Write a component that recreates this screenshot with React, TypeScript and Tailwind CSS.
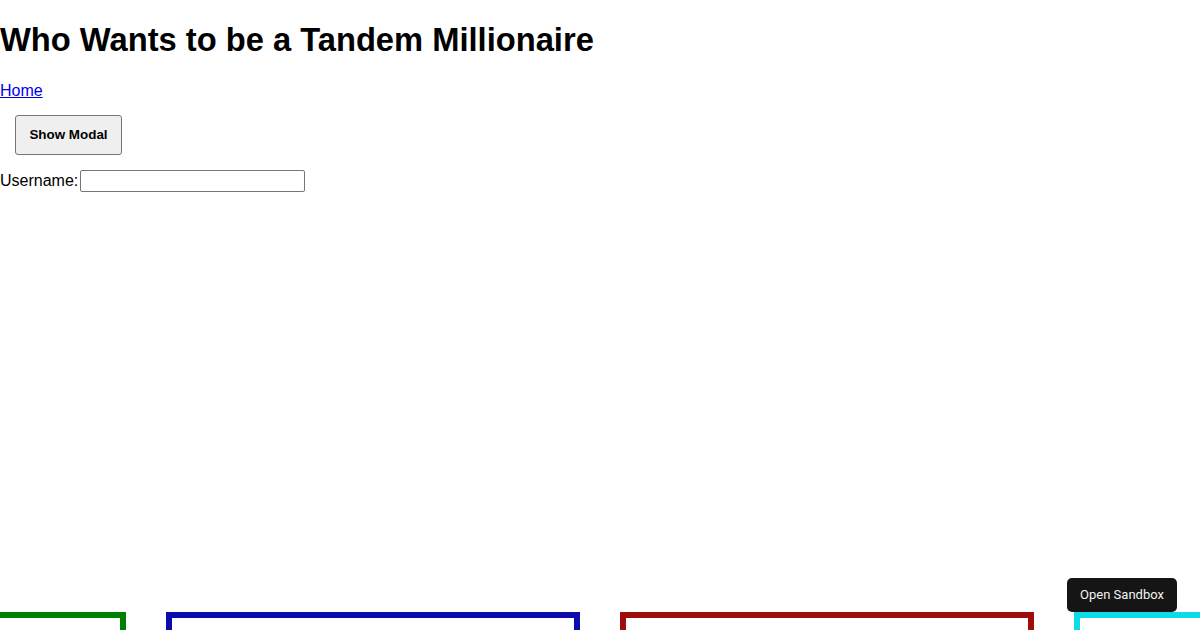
import React from "react";

const boxes = [
  { color: "border-[#008000]" },
  { color: "border-[#0c0cae]" },
  { color: "border-[#a00d0d]" },
  { color: "border-[#0ddbe6]" },
];

export default function App() {
  return (
    <div className="relative h-[630px] w-[1200px] overflow-hidden bg-white font-['Liberation_Sans',Arial,sans-serif] text-black flex flex-col">
      <h1 className="mt-[21px] mb-[24px] text-[32.7px] leading-[37px] font-bold">
        Who Wants to be a Tandem Millionaire
      </h1>
      <div className="text-base leading-[18px]">
        <a href="#" className="text-[#0000ee] underline">
          Home
        </a>
      </div>
      <div className="pt-[15px] pl-[15px]">
        <button className="h-10 w-[107px] bg-[#efefef] border border-[#767676] rounded-[3px] text-[13.4px] font-bold">
          Show Modal
        </button>
      </div>
      <div className="mt-[15px] flex items-center text-base leading-[18px]">
        <label htmlFor="username">Username:</label>
        <input
          id="username"
          type="text"
          className="ml-[2px] h-[22px] w-[225px] border border-[#767676] rounded-[2px] px-0.5"
        />
      </div>

      {/* player columns peeking in from below */}
      <div className="mt-auto h-[18px] flex justify-center gap-10">
        {boxes.map((b, i) => (
          <div
            key={i}
            className={`w-[414px] h-[200px] shrink-0 border-[6px] ${b.color}`}
          />
        ))}
      </div>

      <button className="absolute right-[23px] bottom-[18px] h-[34px] w-[110px] rounded-[5px] bg-[#151515] text-[13px] text-[#f2f2f2] font-['Roboto',sans-serif]">
        Open Sandbox
      </button>
    </div>
  );
}
